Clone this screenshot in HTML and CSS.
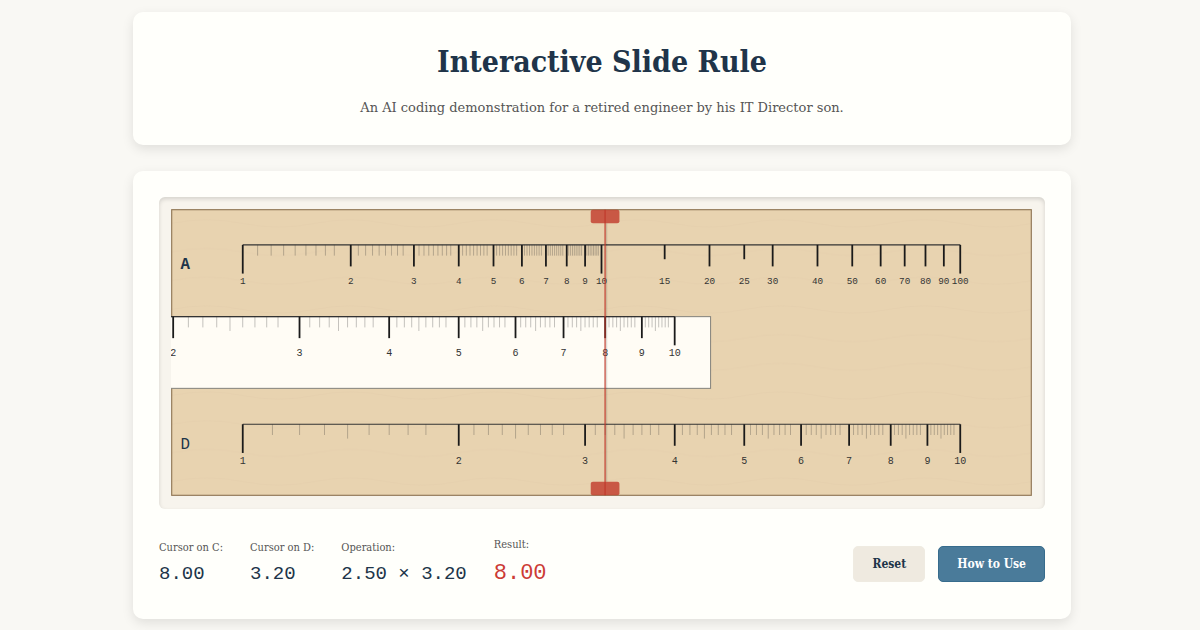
FILE: index.html
```html
<!DOCTYPE html>
<html lang="en">
<head>
<meta charset="utf-8">
<meta name="viewport" content="width=device-width, initial-scale=1">
<title>Interactive Slide Rule</title>
<link rel="stylesheet" href="styles.css">
</head>
<body>
<main class="page">
  <header class="card intro">
    <h1 class="title">Interactive Slide Rule</h1>
    <p class="subtitle">An AI coding demonstration for a retired engineer by his IT Director son.</p>
  </header>

  <section class="card workspace">
    <div class="frame">
      <svg class="rule" viewBox="0 0 1200 400" role="img" aria-label="Slide rule with A, C and D scales">
        <defs>
          <pattern id="grain" width="200" height="40" patternUnits="userSpaceOnUse">
            <path class="grain-line" d="M0 20 Q50 10 100 20 T200 20"/>
          </pattern>
        </defs>
        <rect class="wood" x="0" y="0" width="1200" height="400"/>
        <rect x="0" y="0" width="1200" height="400" fill="url(#grain)"/>
        <rect class="wood-edge" x="1" y="1" width="1198" height="398"/>
        <text class="scale-name strong" x="20" y="84">A</text>
        <text class="scale-name" x="20" y="335">D</text>
        <g id="scale-a" class="fine"></g>
        <g id="scale-d"></g>
        <rect class="slide" x="-448" y="150" width="1200" height="100"/>
        <g id="scale-c"></g>
        <g class="cursor">
          <rect class="handle" x="585" y="1" width="40" height="19" rx="3"/>
          <rect class="handle" x="585" y="380" width="40" height="19" rx="3"/>
          <line class="hair-shade" x1="607" y1="20" x2="607" y2="380"/>
          <line class="hair" x1="605" y1="1" x2="605" y2="399"/>
        </g>
      </svg>
    </div>

    <div class="controls">
      <div class="readouts">
        <div class="readout">
          <label class="label" for="cursor-c">Cursor on C:</label>
          <output class="value" id="cursor-c">8.00</output>
        </div>
        <div class="readout">
          <label class="label" for="cursor-d">Cursor on D:</label>
          <output class="value" id="cursor-d">3.20</output>
        </div>
        <div class="readout">
          <label class="label" for="operation">Operation:</label>
          <output class="value" id="operation">2.50 × 3.20</output>
        </div>
        <div class="readout">
          <label class="label" for="result">Result:</label>
          <output class="value result" id="result">8.00</output>
        </div>
      </div>
      <div class="actions">
        <button class="button" type="button">Reset</button>
        <button class="button primary" type="button">How to Use</button>
      </div>
    </div>
  </section>
</main>
<script src="scales.js"></script>
</body>
</html>
```
FILE: styles.css
```css
* {
  box-sizing: border-box;
}

body {
  margin: 0;
  background: #f9f8f4;
  color: #203449;
  font-family: "DejaVu Serif Condensed", "DejaVu Serif", serif;
}

.page {
  display: flex;
  flex-direction: column;
  gap: 26px;
  max-width: 942px;
  margin: 0 auto;
  padding: 12px 0 12px 4px;
}

.card {
  padding: 26px;
  border-radius: 10px;
  background: #fffffb;
  box-shadow: 0 4px 12px rgba(0, 0, 0, 0.1);
}

.intro {
  padding: 28px 26px 25px;
  text-align: center;
}

.title {
  margin: 0 0 12px;
  font-size: 30px;
  line-height: 44px;
  font-weight: 700;
}

.subtitle {
  margin: 0;
  color: #555;
  font-family: "DejaVu Serif", serif;
  font-size: 13px;
  line-height: 24px;
}

.frame {
  padding: 12px 13px 13px 12px;
  border-radius: 6px;
  background: #f7f4ed;
  box-shadow: inset 0 2px 4px rgba(0, 0, 0, 0.14);
}

.rule {
  display: block;
  width: 100%;
  height: auto;
  overflow: hidden;
}

.wood {
  fill: #e8d3b0;
}

.wood-edge {
  fill: none;
  stroke: #8b7355;
  stroke-width: 1.5;
}

.grain-line {
  fill: none;
  stroke: #d4b896;
  stroke-width: 1;
  opacity: 0.15;
}

.slide {
  fill: #fffcf5;
  stroke: #8a8880;
  stroke-width: 1.5;
}

.axis {
  stroke: #333;
  stroke-width: 1.5;
}

.tick {
  stroke: #1a1a1a;
  stroke-width: 2.5;
}

.tick-minor {
  stroke: #333;
  stroke-width: 1;
  opacity: 0.4;
}

.number {
  fill: #333;
  font-family: "Liberation Mono", monospace;
  font-size: 14px;
  text-anchor: middle;
}

.fine .number {
  font-size: 13px;
}

.scale-name {
  fill: #203449;
  font-family: "Liberation Mono", monospace;
  font-size: 22px;
  text-anchor: middle;
}

.strong {
  font-weight: 700;
}

.handle {
  fill: #c0392b;
  opacity: 0.8;
}

.hair {
  stroke: #c0392b;
  stroke-width: 2;
  opacity: 0.8;
}

.hair-shade {
  stroke: #000;
  stroke-width: 2;
  opacity: 0.12;
}

.controls {
  display: flex;
  flex-wrap: wrap;
  align-items: center;
  justify-content: space-between;
  gap: 26px;
  margin-top: 26px;
}

.readouts {
  display: flex;
  flex-wrap: wrap;
  align-items: center;
  gap: 27px;
}

.readout {
  display: flex;
  flex-direction: column;
  gap: 2px;
  padding-bottom: 2px;
}

.label {
  color: #555;
  font-size: 11px;
  line-height: 20px;
}

.value {
  font-family: "Liberation Mono", monospace;
  font-size: 19px;
  line-height: 28px;
}

.result {
  color: #cc3b35;
  font-size: 22px;
  line-height: 34px;
}

.actions {
  display: flex;
  gap: 13px;
}

.button {
  height: 36px;
  padding: 0 18px;
  border: 1px solid #efebe1;
  border-radius: 5px;
  background: #efeae0;
  color: #203449;
  font-family: inherit;
  font-size: 12px;
  font-weight: 700;
}

.primary {
  border-color: #376c8c;
  background: #4a7b9a;
  color: #fff;
}
```
FILE: scales.js
```javascript
const NS = "http://www.w3.org/2000/svg";

function add(group, name, attributes, text) {
  const node = document.createElementNS(NS, name);
  for (const key in attributes) node.setAttribute(key, attributes[key]);
  if (text !== undefined) node.textContent = text;
  group.appendChild(node);
}

function drawScale(id, options) {
  const group = document.getElementById(id);
  const { y, start, decade, end, labelY, longTenths } = options;
  const position = value => start + decade * Math.log10(value);
  const tick = (value, height, kind) => {
    const x = position(value);
    if (x >= 0) add(group, "line", { class: kind, x1: x, x2: x, y1: y, y2: y + height });
  };
  const number = value => {
    const x = position(value);
    if (x >= 0) add(group, "text", { class: "number", x: x, y: labelY }, value);
  };

  add(group, "line", { class: "axis", x1: Math.max(0, start), x2: position(end), y1: y, y2: y });
  for (let unit = 1; unit < 10; unit++) {
    for (let tenth = 1; tenth < 9; tenth++) {
      tick(unit + tenth / 10, longTenths && tenth === 4 ? 20 : 15, "tick-minor");
    }
    tick(unit, unit === 1 ? 40 : 30, "tick");
    number(unit);
  }
  tick(10, 40, "tick");
  number(10);
  if (end === 100) {
    for (const value of [15, 20, 25, 30, 40, 50, 60, 70, 80, 90, 100]) {
      tick(value, value === 100 ? 40 : value === 15 || value === 25 ? 20 : 30, "tick");
      number(value);
    }
  }
}

drawScale("scale-a", { y: 50, start: 100, decade: 500, end: 100, labelY: 105, longTenths: false });
drawScale("scale-c", { y: 150, start: -298, decade: 1000, end: 10, labelY: 205, longTenths: true });
drawScale("scale-d", { y: 300, start: 100, decade: 1000, end: 10, labelY: 355, longTenths: true });
```
